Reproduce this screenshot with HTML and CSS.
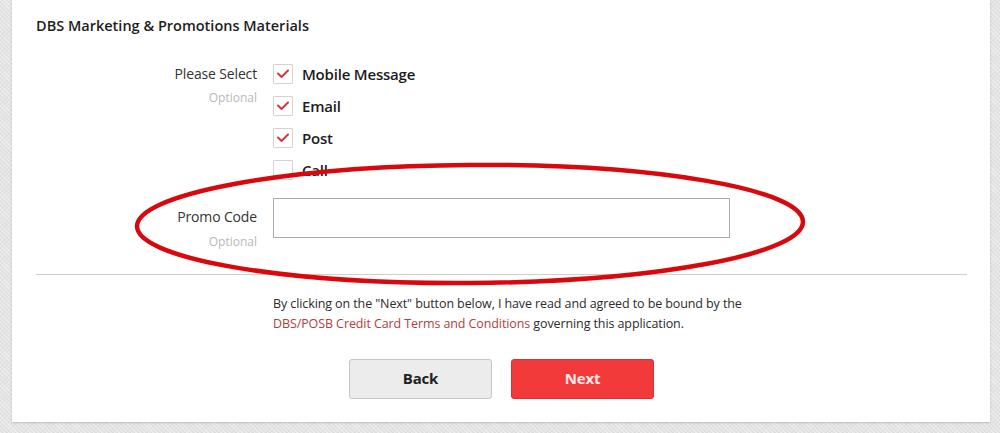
FILE: index.html
```html
<!DOCTYPE html>
<html lang="en">
<head>
<meta charset="utf-8">
<title>DBS Marketing &amp; Promotions Materials</title>
<link rel="stylesheet" href="styles.css">
</head>
<body>
<main class="card">
  <h2 class="title">DBS Marketing &amp; Promotions Materials</h2>

  <div class="row">
    <div class="label-col">
      <div class="label">Please Select</div>
      <div class="optional">Optional</div>
    </div>
    <ul class="checks">
      <li class="check-item"><span class="box checked"><svg viewBox="0 0 20 20" width="20" height="20"><path d="M5 9.5 L8.5 13 L15 6.5" /></svg></span><span class="check-label">Mobile Message</span></li>
      <li class="check-item"><span class="box checked"><svg viewBox="0 0 20 20" width="20" height="20"><path d="M5 9.5 L8.5 13 L15 6.5" /></svg></span><span class="check-label">Email</span></li>
      <li class="check-item"><span class="box checked"><svg viewBox="0 0 20 20" width="20" height="20"><path d="M5 9.5 L8.5 13 L15 6.5" /></svg></span><span class="check-label">Post</span></li>
      <li class="check-item"><span class="box"></span><span class="check-label">Call</span></li>
    </ul>
  </div>

  <div class="row promo-row">
    <div class="label-col">
      <div class="label promo-label">Promo Code</div>
      <div class="optional promo-optional">Optional</div>
    </div>
    <div class="input-col"><input class="text-input" type="text"></div>
  </div>

  <hr class="divider">

  <p class="terms">By clicking on the "Next" button below, I have read and agreed to be bound by the<br><a class="terms-link" href="#">DBS/POSB Credit Card Terms and Conditions</a> governing this application.</p>

  <div class="actions">
    <button class="btn btn-back" type="button">Back</button>
    <button class="btn btn-next" type="button">Next</button>
  </div>
</main>

<svg class="annotation" width="1000" height="433" viewBox="0 0 1000 433">
  <ellipse cx="470" cy="224" rx="333" ry="59" transform="rotate(-0.4 470 224)" />
</svg>
</body>
</html>
```

FILE: styles.css
```css
* { box-sizing: border-box; }

html, body {
  margin: 0;
  padding: 0;
  width: 1000px;
  height: 433px;
  overflow: hidden;
}

body {
  position: relative;
  font-family: "Open Sans", "Noto Sans", "Liberation Sans", sans-serif;
  color: #222;
  background-color: #e4e4e4;
  background-image:
    repeating-linear-gradient(45deg, rgba(255,255,255,0.35) 0 1px, transparent 1px 3px),
    repeating-linear-gradient(-45deg, rgba(0,0,0,0.03) 0 1px, transparent 1px 3px);
}

.card {
  margin: 0 10px 0 12px;
  height: 422px;
  background: #fff;
  padding: 16px 23px 0 24px;
  box-shadow: 0 1px 2px rgba(0,0,0,0.18);
}

.title {
  margin: 0;
  font-size: 14.5px;
  line-height: 20px;
  font-weight: 600;
  color: #1e1e1e;
  letter-spacing: 0;
}

.row {
  display: flex;
  gap: 16px;
  margin-top: 28px;
}

.label-col {
  width: 221px;
  text-align: right;
  flex: none;
}

.label {
  font-size: 14px;
  line-height: 20px;
  color: #333;
  letter-spacing: -0.15px;
}

.optional {
  margin-top: 4px;
  font-size: 12px;
  line-height: 20px;
  color: #b8b8b8;
  letter-spacing: 0;
}

.checks {
  list-style: none;
  margin: 0;
  padding: 0;
  display: flex;
  flex-direction: column;
  gap: 12px;
}

.check-item {
  display: flex;
  align-items: center;
  gap: 9px;
  height: 20px;
}

.box {
  width: 20px;
  height: 20px;
  border: 1px solid #d3d3d3;
  border-radius: 1px;
  background: #fff;
  display: flex;
  align-items: center;
  justify-content: center;
  flex: none;
}

.box svg {
  display: block;
  margin: -1px;
}

.box svg path {
  fill: none;
  stroke: #cf3a3e;
  stroke-width: 2;
  stroke-linecap: round;
  stroke-linejoin: round;
}

.check-label {
  font-size: 15px;
  font-weight: 600;
  color: #1c1c1c;
  line-height: 20px;
  letter-spacing: -0.2px;
}

.promo-row {
  margin-top: 18px;
}

.promo-label {
  padding-top: 9px;
}

.promo-optional {
  margin-top: 5px;
}

.input-col {
  flex: none;
}

.text-input {
  display: block;
  width: 457px;
  height: 40px;
  border: 1px solid #a9a9a9;
  border-radius: 0;
  background: #fff;
  padding: 0 10px;
  font: inherit;
}

.divider {
  margin: 22px 0 0 0;
  border: 0;
  border-top: 1px solid #cfcfcf;
  height: 0;
}

.terms {
  margin: 19px 0 0 0;
  padding-left: 237px;
  font-size: 12.5px;
  line-height: 20px;
  color: #2b2b2b;
  letter-spacing: -0.1px;
}

.terms-link {
  color: #b3403e;
  text-decoration: none;
}

.actions {
  display: flex;
  justify-content: center;
  gap: 19px;
  margin-top: 25px;
}

.btn {
  width: 143px;
  height: 40px;
  border-radius: 3px;
  font-family: inherit;
  font-size: 15px;
  line-height: 18px;
  padding: 0 0 3px 0;
  font-weight: 700;
  letter-spacing: -0.2px;
  cursor: pointer;
}

.btn-back {
  background: #ececec;
  border: 1px solid #c6c6c6;
  color: #222;
}

.btn-next {
  background: #f23a3a;
  border: 1px solid #dc3030;
  color: #fbecec;
}

.annotation {
  position: absolute;
  top: 0;
  left: 0;
  pointer-events: none;
}

.annotation ellipse {
  fill: none;
  stroke: #d8080c;
  stroke-width: 4.5;
}
```
